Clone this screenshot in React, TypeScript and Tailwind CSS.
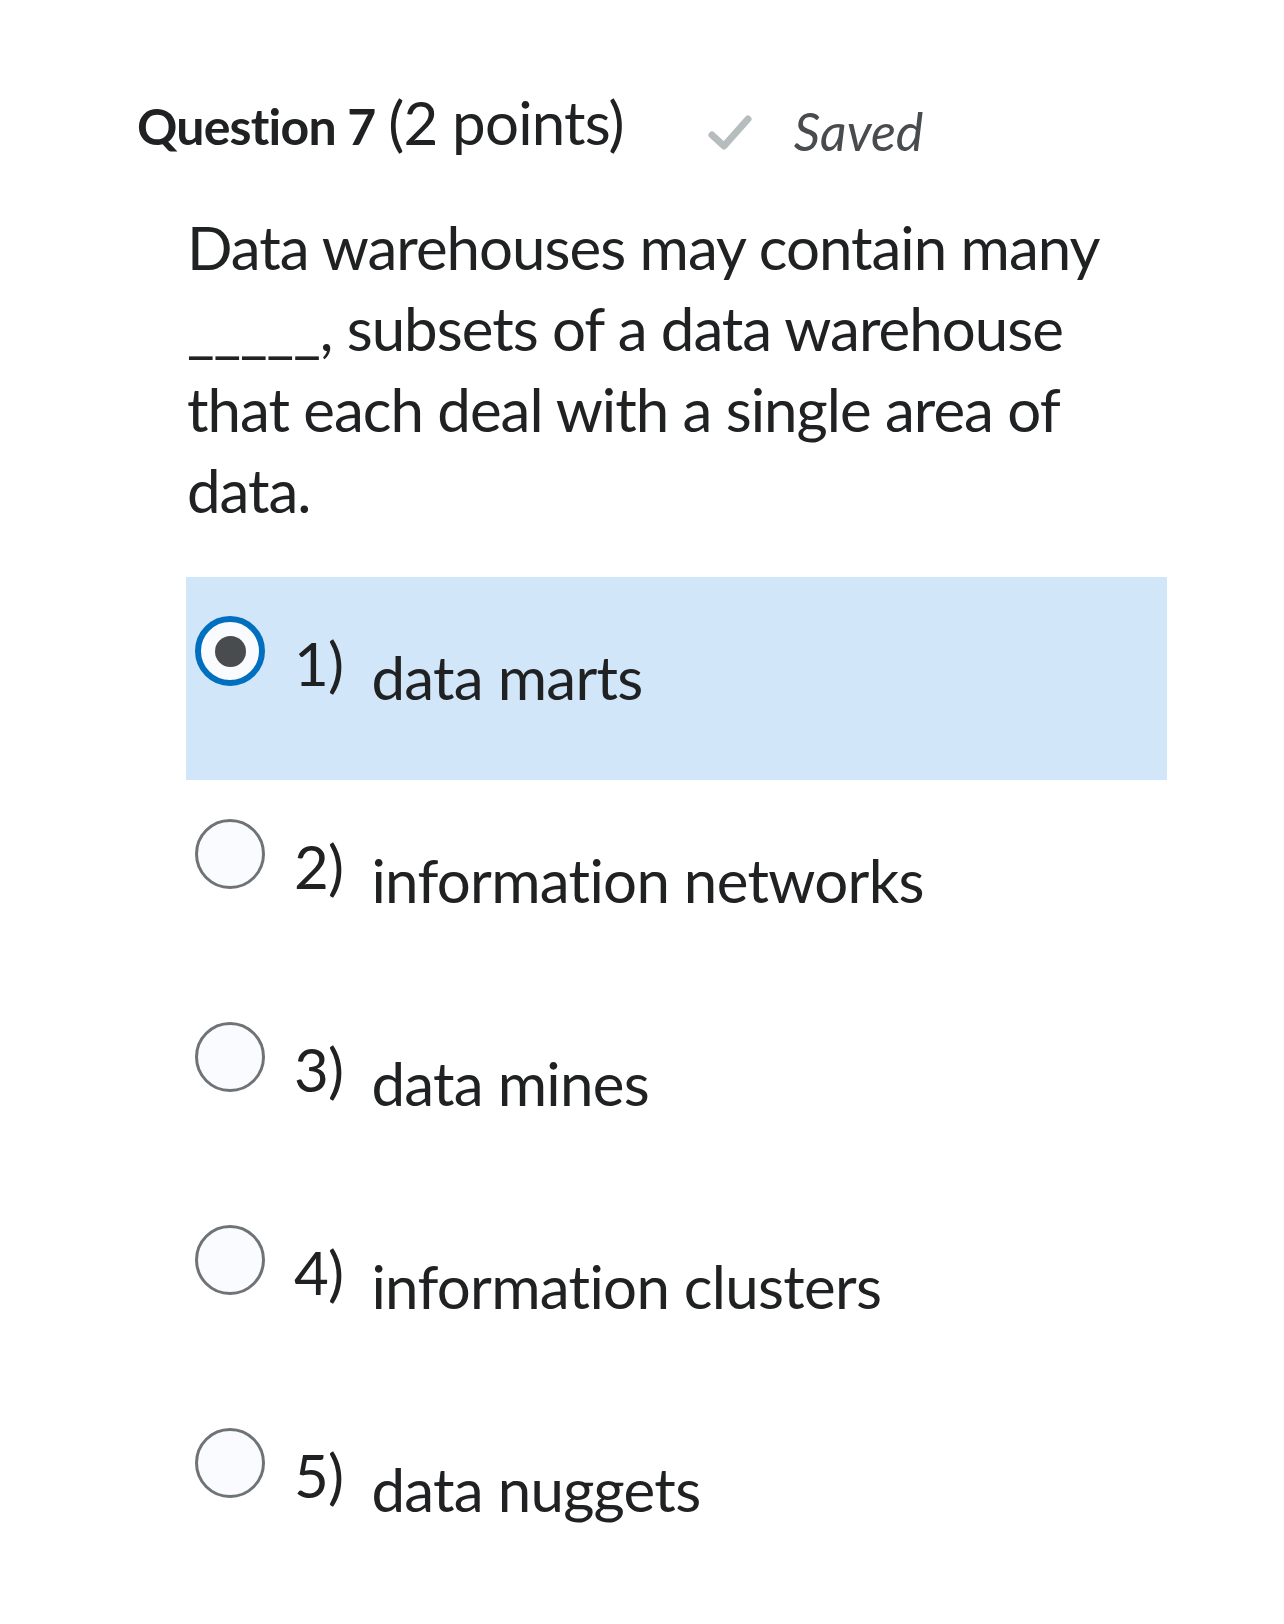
import React from "react";

const options = [
  { n: "1)", t: "data marts", selected: true },
  { n: "2)", t: "information networks", selected: false },
  { n: "3)", t: "data mines", selected: false },
  { n: "4)", t: "information clusters", selected: false },
  { n: "5)", t: "data nuggets", selected: false },
];

function Radio({ selected }: { selected: boolean }) {
  if (selected) {
    return (
      <div className="w-[70px] h-[70px] rounded-full border-[6px] border-[#006fbf] bg-[#f9fbff] flex items-center justify-center shrink-0">
        <div className="w-[31px] h-[31px] rounded-full bg-[#494c4e]" />
      </div>
    );
  }
  return (
    <div className="w-[70px] h-[70px] rounded-full border-[3px] border-[#6e7376] bg-[#f9fbff] shrink-0" />
  );
}

export default function App() {
  return (
    <div className="w-[1284px] min-h-[1624px] bg-white text-[#202122]" style={{ fontFamily: "Lato, 'Noto Sans', sans-serif" }}>
      <div className="pt-[86px] pl-[137px] flex items-baseline">
        <span className="font-bold text-[50px] leading-[1.2] tracking-[-0.8px]">Question 7</span>
        <span className="text-[60px] leading-[1.2] tracking-[-0.8px] ml-[13px]">(2 points)</span>
        <svg width="46" height="37" viewBox="0 0 46 37" className="ml-[83px] shrink-0 relative top-[6px]">
          <path d="M5 21 L17 32 L41 5" fill="none" stroke="#b7bcbf" strokeWidth="7" strokeLinecap="round" strokeLinejoin="round" />
        </svg>
        <span className="ml-[41px] italic text-[52px] leading-[1.2] text-[#494c4e] relative top-[6px]">Saved</span>
      </div>
      <div className="ml-[187px] w-[925px] mt-[49px] text-[60px] leading-[81px] tracking-[-1px]">
        Data warehouses may contain many _____, subsets of a data warehouse that each deal with a single area of data.
      </div>
      <div className="ml-[186px] w-[981px] mt-[46px] flex flex-col">
        {options.map((o) => (
          <div
            key={o.n}
            className={`h-[203px] flex items-start pt-[39px] pl-[9px] ${o.selected ? "bg-[#d1e6f9]" : ""}`}
          >
            <Radio selected={o.selected} />
            <span className="ml-[29px] text-[60px] leading-[70px] tracking-[-0.7px] mt-[12px]">{o.n}</span>
            <span className="ml-[28px] text-[60px] leading-[70px] tracking-[-0.7px] mt-[26px]">{o.t}</span>
          </div>
        ))}
      </div>
    </div>
  );
}
